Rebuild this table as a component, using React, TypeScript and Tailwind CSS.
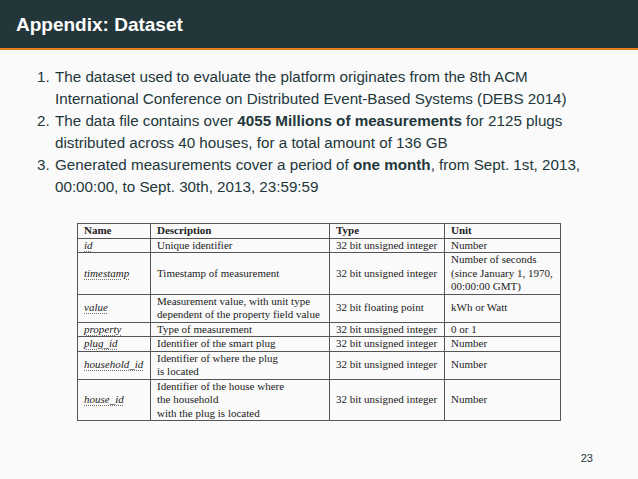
import React from "react";

const rows: { name: string; desc: string[]; type: string; unit: string[] }[] = [
  { name: "id", desc: ["Unique identifier"], type: "32 bit unsigned integer", unit: ["Number"] },
  { name: "timestamp", desc: ["Timestamp of measurement"], type: "32 bit unsigned integer", unit: ["Number of seconds", "(since January 1, 1970,", "00:00:00 GMT)"] },
  { name: "value", desc: ["Measurement value, with unit type", "dependent of the property field value"], type: "32 bit floating point", unit: ["kWh or Watt"] },
  { name: "property", desc: ["Type of measurement"], type: "32 bit unsigned integer", unit: ["0 or 1"] },
  { name: "plug_id", desc: ["Identifier of the smart plug"], type: "32 bit unsigned integer", unit: ["Number"] },
  { name: "household_id", desc: ["Identifier of where the plug", "is located"], type: "32 bit unsigned integer", unit: ["Number"] },
  { name: "house_id", desc: ["Identifier of the house where", "the household", "with the plug is located"], type: "32 bit unsigned integer", unit: ["Number"] },
];

export default function App() {
  return (
    <div className="w-[638px] h-[479px] bg-[#fafafa] flex flex-col text-[#23373b]" style={{ fontFamily: '"Liberation Sans", Arial, sans-serif' }}>
      <div className="h-[48px] bg-[#23373b] flex items-center px-[16px] shrink-0">
        <span className="text-white font-bold text-[19px] leading-none">Appendix: Dataset</span>
      </div>
      <div className="h-[2px] bg-[#eb811b] shrink-0" />
      <div className="flex flex-col pl-[37px] pt-[16px] text-[15.2px] leading-[22px]">
        <div className="flex">
          <span className="w-[18px] shrink-0">1.</span>
          <span className="whitespace-nowrap">The dataset used to evaluate the platform originates from the 8th ACM<br />International Conference on Distributed Event-Based Systems (DEBS 2014)</span>
        </div>
        <div className="flex">
          <span className="w-[18px] shrink-0">2.</span>
          <span className="whitespace-nowrap">The data file contains over <b>4055 Millions of measurements</b> for 2125 plugs<br />distributed across 40 houses, for a total amount of 136 GB</span>
        </div>
        <div className="flex">
          <span className="w-[18px] shrink-0">3.</span>
          <span className="whitespace-nowrap">Generated measurements cover a period of <b>one month</b>, from Sept. 1st, 2013,<br />00:00:00, to Sept. 30th, 2013, 23:59:59</span>
        </div>
      </div>
      <div className="pl-[77px] pt-[25px]">
        <table className="border-collapse text-[11px] leading-[13.5px] text-[#222]" style={{ fontFamily: '"Liberation Serif", "Times New Roman", serif' }}>
          <colgroup>
            <col className="w-[73px]" />
            <col className="w-[179px]" />
            <col className="w-[115px]" />
            <col className="w-[116px]" />
          </colgroup>
          <thead>
            <tr>
              <th className="border border-[#555] px-[6px] py-0 text-left font-bold">Name</th>
              <th className="border border-[#555] px-[6px] py-0 text-left font-bold">Description</th>
              <th className="border border-[#555] px-[6px] py-0 text-left font-bold">Type</th>
              <th className="border border-[#555] px-[6px] py-0 text-left font-bold">Unit</th>
            </tr>
          </thead>
          <tbody>
            {rows.map((r) => (
              <tr key={r.name}>
                <td className="border border-[#555] px-[6px] py-0 align-middle">
                  <span className="italic underline decoration-dotted decoration-[#777] underline-offset-2">{r.name}</span>
                </td>
                <td className="border border-[#555] px-[6px] py-0 align-middle">
                  {r.desc.map((d, i) => (
                    <div key={i}>{d}</div>
                  ))}
                </td>
                <td className="border border-[#555] px-[6px] py-0 align-middle">{r.type}</td>
                <td className="border border-[#555] px-[6px] py-0 align-middle">
                  {r.unit.map((d, i) => (
                    <div key={i}>{d}</div>
                  ))}
                </td>
              </tr>
            ))}
          </tbody>
        </table>
      </div>
      <div className="flex-1" />
      <div className="flex justify-end pr-[45px] pb-[15px] text-[11px] leading-none">23</div>
    </div>
  );
}
